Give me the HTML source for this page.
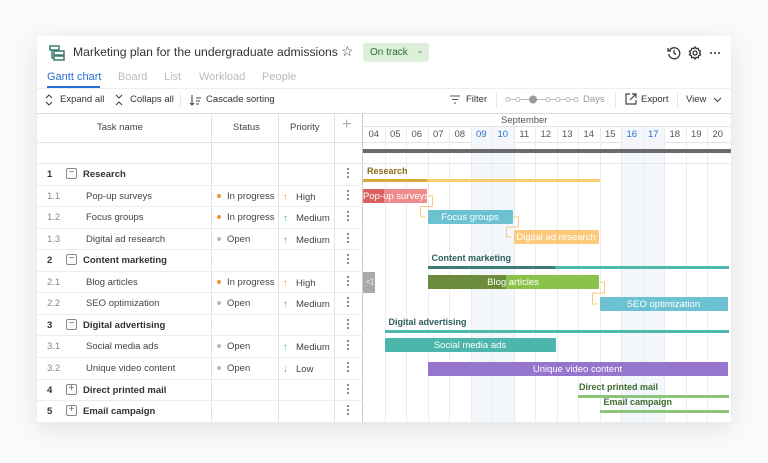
<!DOCTYPE html>
<html><head><meta charset="utf-8"><style>
*{box-sizing:border-box;margin:0;padding:0}
body{width:768px;height:463px;background:#fafafa;font-family:"Liberation Sans",sans-serif;position:relative;overflow:hidden;color:#333}
.card{position:absolute;left:37px;top:36px;width:694px;height:386px;background:#fff;box-shadow:0 6px 24px rgba(0,0,0,0.10);overflow:hidden}
.a{position:absolute}
.t{position:absolute;white-space:nowrap}
.hl{position:absolute;height:1px;background:#e3e3e3}
.vl{position:absolute;width:1px;background:#e6e6e6}
.dots{position:absolute;width:3px}
.dots i{display:block;width:2px;height:2px;background:#666;border-radius:1px;margin-bottom:2px}
.bar{position:absolute;height:14px;color:#fff;font-size:9.5px;line-height:15px;text-align:center;border-radius:1px;overflow:hidden;white-space:nowrap}
.sum{position:absolute;font-size:9px;font-weight:bold;white-space:nowrap}
.box{position:absolute;width:11px;height:11px;border:1px solid #888;border-radius:2px;font-size:10px;line-height:8px;text-align:center;color:#666}
</style></head><body>
<div class="card">
<svg class="a" style="left:12px;top:9px" width="16" height="16" viewBox="0 0 16 16" fill="none" stroke="#3d7a6e" stroke-width="1.5"><rect x="1" y="1" width="9" height="4"/><rect x="5" y="6" width="10" height="4"/><rect x="5" y="11" width="10" height="4"/><path d="M3 5v8h2"/></svg>
<div class="t" style="left:36px;top:9px;font-size:12.2px;color:#333">Marketing plan for the undergraduate admissions</div>
<div class="t" style="left:304px;top:7px;font-size:14px;color:#444">☆</div>
<div class="a" style="left:326px;top:7px;width:66px;height:19px;background:#dcefd9;border-radius:3px"></div>
<div class="t" style="left:333px;top:11px;font-size:10px;color:#2e6b34">On track</div>
<div class="t" style="left:379px;top:9px;font-size:9px;color:#777">⌄</div>
<svg class="a" style="left:630px;top:10px" width="14" height="14" viewBox="0 0 14 14" fill="none" stroke="#333" stroke-width="1.3"><path d="M2.5 4.5A5.5 5.5 0 1 1 1.8 8"/><path d="M1 2v3h3"/><path d="M7 4v3l2 1.5"/></svg>
<svg class="a" style="left:651px;top:10px" width="14" height="14" viewBox="0 0 14 14" fill="none" stroke="#333" stroke-width="1.3"><circle cx="7" cy="7" r="2"/><path d="M7 1l1.2 1.6 2-.4.5 2 1.8 1-.9 1.8.9 1.8-1.8 1-.5 2-2-.4L7 13l-1.2-1.6-2 .4-.5-2-1.8-1L2.4 7 1.5 5.2l1.8-1 .5-2 2 .4z"/></svg>
<div class="a" style="left:673px;top:16px;width:2px;height:2px;background:#333;border-radius:1px"></div>
<div class="a" style="left:677px;top:16px;width:2px;height:2px;background:#333;border-radius:1px"></div>
<div class="a" style="left:681px;top:16px;width:2px;height:2px;background:#333;border-radius:1px"></div>
<div class="t" style="left:10px;top:35px;font-size:11px;color:#2a6fd0">Gantt chart</div>
<div class="a" style="left:10px;top:50px;width:53px;height:2px;background:#2a6fd0"></div>
<div class="t" style="left:81px;top:35px;font-size:11px;color:#bbb">Board</div>
<div class="t" style="left:127px;top:35px;font-size:11px;color:#bbb">List</div>
<div class="t" style="left:162px;top:35px;font-size:11px;color:#bbb">Workload</div>
<div class="t" style="left:225px;top:35px;font-size:11px;color:#bbb">People</div>
<div class="hl" style="left:0;top:52px;width:694px;background:#eee"></div>
<svg class="a" style="left:7px;top:58px" width="10" height="12" viewBox="0 0 10 12" fill="none" stroke="#444" stroke-width="1.1"><path d="M2 4l3-3 3 3M2 8l3 3 3-3"/></svg>
<div class="t" style="left:23px;top:58px;font-size:9.5px;color:#333">Expand all</div>
<svg class="a" style="left:77px;top:58px" width="10" height="12" viewBox="0 0 10 12" fill="none" stroke="#444" stroke-width="1.1"><path d="M2 1l3 3 3-3M2 11l3-3 3 3"/></svg>
<div class="t" style="left:93px;top:58px;font-size:9.5px;color:#333">Collaps all</div>
<div class="vl" style="left:143px;top:57px;height:14px"></div>
<svg class="a" style="left:152px;top:58px" width="13" height="12" viewBox="0 0 13 12" fill="none" stroke="#444" stroke-width="1.1"><path d="M3 1v10M1 9l2 2 2-2M7 4h5M7 7h4M7 10h3"/></svg>
<div class="t" style="left:169px;top:58px;font-size:9.5px;color:#333">Cascade sorting</div>
<svg class="a" style="left:412px;top:59px" width="12" height="9" viewBox="0 0 12 9" fill="none" stroke="#555" stroke-width="1.1"><path d="M1 1h10M3 4.5h6M5 8h2"/></svg>
<div class="t" style="left:429px;top:58px;font-size:9.5px;color:#333">Filter</div>
<div class="vl" style="left:459px;top:57px;height:14px"></div>
<svg class="a" style="left:468px;top:58px" width="74" height="11" viewBox="0 0 74 11" fill="none" stroke="#bbb" stroke-width="1"><path d="M5 5.5h64"/><circle cx="3" cy="5.5" r="2" fill="#fff"/><circle cx="13" cy="5.5" r="2" fill="#fff"/><circle cx="43" cy="5.5" r="2" fill="#fff"/><circle cx="53" cy="5.5" r="2" fill="#fff"/><circle cx="63" cy="5.5" r="2" fill="#fff"/><circle cx="71" cy="5.5" r="2" fill="#fff"/><circle cx="28" cy="5.5" r="4" fill="#999" stroke="none"/></svg>
<div class="t" style="left:546px;top:58px;font-size:9.5px;color:#999">Days</div>
<div class="vl" style="left:578px;top:57px;height:14px"></div>
<svg class="a" style="left:588px;top:57px" width="12" height="12" viewBox="0 0 12 12" fill="none" stroke="#444" stroke-width="1.2"><path d="M5 1H1v10h10V7"/><path d="M7 1h4v4M11 1L5 7"/></svg>
<div class="t" style="left:604px;top:58px;font-size:9.5px;color:#333">Export</div>
<div class="vl" style="left:640px;top:57px;height:14px"></div>
<div class="t" style="left:649px;top:58px;font-size:9.5px;color:#333">View</div>
<svg class="a" style="left:676px;top:61px" width="9" height="6" viewBox="0 0 9 6" fill="none" stroke="#444" stroke-width="1.1"><path d="M1 1l3.5 3.5L8 1"/></svg>
<div class="hl" style="left:0;top:77px;width:694px;background:#ddd"></div>
<div class="t" style="left:60px;top:86px;font-size:9.5px;color:#444">Task name</div>
<div class="t" style="left:196px;top:86px;font-size:9.5px;color:#444">Status</div>
<div class="t" style="left:253px;top:86px;font-size:9.5px;color:#444">Priority</div>
<div class="t" style="left:305px;top:80px;font-size:16px;color:#aaa">+</div>
<div class="t" style="left:464px;top:79px;font-size:9.5px;color:#555">September</div>
<div class="hl" style="left:326px;top:90px;width:368px"></div>
<div class="hl" style="left:0;top:106px;width:694px"></div>
<div id="g"></div>
</div>
<script>
var c=document.querySelector('.card');var h='';
var X0=326,W=21.5,Y0=127,R=21.55;
[5,6,12,13].forEach(function(i){h+='<div class="a" style="left:'+(X0+i*W)+'px;top:91px;width:'+W+'px;height:300px;background:#f3f7fb"></div>';});
for(var i=0;i<17;i++){var d=4+i;var col=(i==5||i==6||i==12||i==13)?'#2a6fd0':'#555';
h+='<div class="t" style="left:'+(X0+i*W)+'px;width:'+W+'px;text-align:center;top:93px;font-size:9.5px;color:'+col+'">'+(d<10?'0'+d:d)+'</div>';
if(i>0)h+='<div class="vl" style="left:'+(X0+i*W)+'px;top:91px;height:300px;background:#ececec"></div>';}
[174,241,297].forEach(function(x){h+='<div class="vl" style="left:'+x+'px;top:78px;height:310px;background:#e3e3e3"></div>';});
h+='<div class="vl" style="left:325px;top:78px;height:310px;background:#ccc"></div>';
h+='<div class="hl" style="left:0;top:'+Y0+'px;width:694px;background:#e8e8e8"></div>';
var rows=[['1','Research',1,'',''],['1.1','Pop-up surveys',0,'p','H'],['1.2','Focus groups',0,'p','M'],['1.3','Digital ad research',0,'o','M'],['2','Content marketing',1,'',''],['2.1','Blog articles',0,'p','H'],['2.2','SEO optimization',0,'o','M'],['3','Digital advertising',1,'',''],['3.1','Social media ads',0,'o','M'],['3.2','Unique video content',0,'o','L'],['4','Direct printed mail',2,'',''],['5','Email campaign',2,'','']];
rows.forEach(function(r,k){var y=Y0+k*R,ty=y+6;
h+='<div class="hl" style="left:0;top:'+(y+R)+'px;width:326px;background:#ececec"></div>';
if(r[2]){h+='<div class="t" style="left:10px;top:'+ty+'px;font-size:9.5px;font-weight:bold;color:#333">'+r[0]+'</div>';
h+='<div class="box" style="left:29px;top:'+(y+5)+'px">'+(r[2]==1?'−':'+')+'</div>';
h+='<div class="t" style="left:46px;top:'+ty+'px;font-size:9.5px;font-weight:bold;color:#333">'+r[1]+'</div>';}
else{h+='<div class="t" style="left:10px;top:'+ty+'px;font-size:9.5px;color:#888">'+r[0]+'</div>';
h+='<div class="t" style="left:49px;top:'+ty+'px;font-size:9.5px;color:#444">'+r[1]+'</div>';
var dc=r[3]=='p'?'#f0923a':'#bbb',st=r[3]=='p'?'In progress':'Open';
h+='<div class="a" style="left:180px;top:'+(y+9)+'px;width:4px;height:4px;border-radius:2px;background:'+dc+'"></div>';
h+='<div class="t" style="left:190px;top:'+ty+'px;font-size:9.5px;color:#444">'+st+'</div>';
var ar=r[4]=='H'?['↑','#f0923a','High']:r[4]=='M'?['↑','#3bb36a','Medium']:['↓','#888','Low'];
h+='<div class="t" style="left:246px;top:'+(ty+1)+'px;font-size:9.5px;color:'+ar[1]+'">'+ar[0]+'</div>';
h+='<div class="t" style="left:259px;top:'+(ty+1)+'px;font-size:9.5px;color:#444">'+ar[2]+'</div>';}
h+='<div class="dots" style="left:310px;top:'+(y+5)+'px"><i></i><i></i><i></i></div>';});
function bx(d){return X0+d*W;}
h+='<div class="a" style="left:326px;top:113px;width:368px;height:4px;background:#6b6b6b"></div>';
function sum(d1,d2,y,col,dark,dd,label,lc,lx){h+='<div class="a" style="left:'+bx(d1)+'px;top:'+y+'px;width:'+(bx(d2)-bx(d1))+'px;height:3px;background:'+col+'"></div>';
if(dd)h+='<div class="a" style="left:'+bx(d1)+'px;top:'+y+'px;width:'+(dd)+'px;height:3px;background:'+dark+'"></div>';
h+='<div class="sum" style="left:'+(bx(d1)+(lx||4))+'px;top:'+(y-13)+'px;color:'+lc+'">'+label+'</div>';}
function bar(d1,d2,y,col,label,dark,dw){h+='<div class="bar" style="left:'+bx(d1)+'px;top:'+y+'px;width:'+(bx(d2)-bx(d1)-1)+'px;background:'+col+'">'+(dark?'<div style="position:absolute;left:0;top:0;height:14px;width:'+dw+'px;background:'+dark+'"></div>':'')+'<span style="position:relative">'+label+'</span></div>';}
sum(0,11,143,'#f8cd6c','#d9a93b',64,'Research','#8a6a1a');
bar(0,3,153,'#ee8b8b','Pop-up surveys','#d96060',21);
bar(3,7,174,'#6cc2d3','Focus groups');
bar(7,11,194,'#fdca7c','Digital ad research');
sum(3,17,230,'#4db8ac','#3f7b75',127,'Content marketing','#2e5e5a');
bar(3,11,239,'#8bc34a','Blog articles','#6b8c3a',78);
bar(11,17,261,'#6cc2d3','SEO optimization');
sum(1,17,294,'#4db8ac',null,0,'Digital advertising','#2e5e5a');
bar(1,9,302,'#4db6ac','Social media ads');
bar(3,17,326,'#9575cd','Unique video content');
sum(10,17,359,'#8bc67a',null,0,'Direct printed mail','#3e6b2e',1);
sum(11,17,374,'#8bc67a',null,0,'Email campaign','#3e6b2e',4);
function con(x1,y1,x2,y2){h+='<svg class="a" style="left:0;top:0;overflow:visible" width="1" height="1"><path d="M'+x1+' '+y1+'h5v'+((y2-y1)/2)+'h-12v'+((y2-y1)/2)+'h5" fill="none" stroke="#fdca7c" stroke-width="1"/></svg>';}
con(bx(3),160,bx(3),181);con(bx(7),181,bx(7),201);con(bx(11),246,bx(11),268);
h+='<div class="a" style="left:326px;top:236px;width:12px;height:21px;background:#aaa"></div><div class="t" style="left:329px;top:240px;font-size:9px;color:#fff">◁</div>';
document.getElementById('g').outerHTML=h;
</script>
</body></html>
